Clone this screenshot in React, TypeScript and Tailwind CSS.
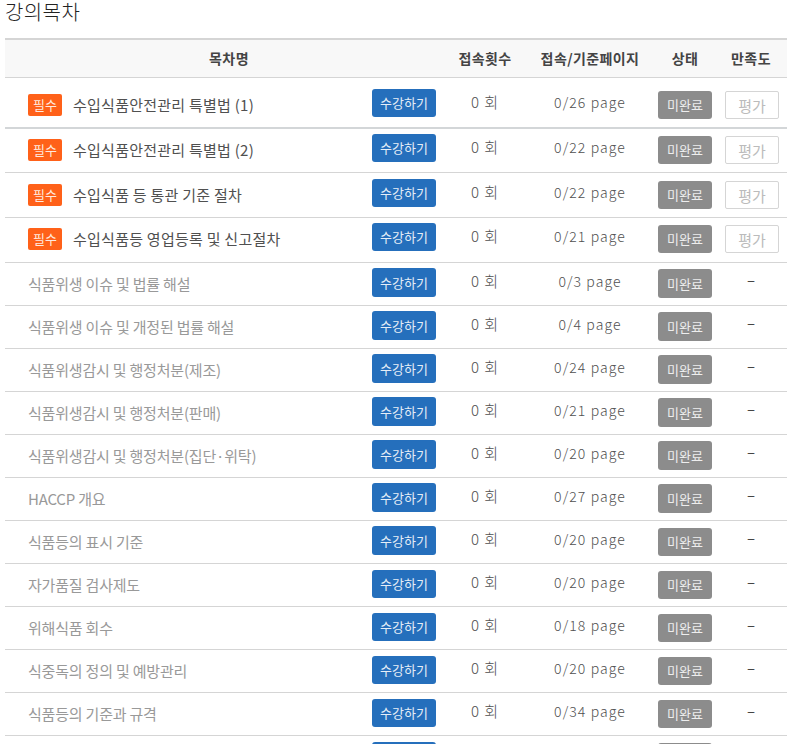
const kr = { fontFamily: '"Noto Sans CJK KR", "Noto Sans", sans-serif' };

type Row = {
  title: string;
  pages: string;
  required?: boolean;
  rowClass: string;
  btnClass: string;
  statusClass: string;
  textClass: string;
  titleClass?: string;
};

const lineB = 'border-b border-[#d5d5d5]';
const top = { rowClass: `h-[43px] pt-[5px] ${lineB}`, btnClass: 'h-[29px]', statusClass: 'mt-[1px] h-[29px]', textClass: 'leading-[26px]', titleClass: 'pt-[5px]' };
const mid = { rowClass: `h-[43px] pt-[5px] ${lineB}`, btnClass: 'h-[29px]', statusClass: 'mt-[2px] h-[28px]', textClass: 'leading-[26px]', titleClass: 'pt-[5px]' };
const low = { rowClass: `h-[43px] pt-[6px] ${lineB}`, btnClass: 'h-[28px]', statusClass: 'mt-[1px] h-[28px]', textClass: 'leading-[24px]', titleClass: 'pt-[4px]' };
const req = { btnClass: 'h-[28px]', statusClass: 'mt-[2px] h-[28px]', textClass: 'leading-[26px]' };

const rows: Row[] = [
  { title: '수입식품안전관리 특별법 (1)', pages: '0/26 page', required: true, rowClass: 'h-[51px] pt-[11px] border-b-2 border-[#d3d6d8]', ...req },
  { title: '수입식품안전관리 특별법 (2)', pages: '0/22 page', required: true, rowClass: `h-[44px] pt-[5px] ${lineB}`, ...req },
  { title: '수입식품 등 통관 기준 절차', pages: '0/22 page', required: true, rowClass: `h-[45px] pt-[6px] ${lineB}`, ...req },
  { title: '수입식품등 영업등록 및 신고절차', pages: '0/21 page', required: true, rowClass: `h-[45px] pt-[5px] ${lineB}`, ...req },
  { title: '식품위생 이슈 및 법률 해설', pages: '0/3 page', ...top },
  { title: '식품위생 이슈 및 개정된 법률 해설', pages: '0/4 page', ...top },
  { title: '식품위생감시 및 행정처분(제조)', pages: '0/24 page', ...top },
  { title: '식품위생감시 및 행정처분(판매)', pages: '0/21 page', ...top },
  { title: '식품위생감시 및 행정처분(집단·위탁)', pages: '0/20 page', ...top },
  { title: 'HACCP 개요', pages: '0/27 page', ...top },
  { title: '식품등의 표시 기준', pages: '0/20 page', ...mid },
  { title: '자가품질 검사제도', pages: '0/20 page', ...low },
  { title: '위해식품 회수', pages: '0/18 page', ...low },
  { title: '식중독의 정의 및 예방관리', pages: '0/20 page', ...low },
  { title: '식품등의 기준과 규격', pages: '0/34 page', ...low },
  { title: '', pages: '', ...low },
];

const cols = 'grid grid-cols-[440px_80px_130px_60px_72px]';

function CourseRow({ row }: { row: Row }) {
  return (
    <div className={`${cols} items-start ${row.rowClass}`}>
      <div className="flex items-start justify-between pr-[9px]">
        {row.required ? (
          <div className="flex items-center pl-[23px] pt-[5px]">
            <span className="flex h-[22px] w-[34px] items-center justify-center rounded-[2px] bg-[#ff6119] text-[13px] text-[#ffe9de]">
              필수
            </span>
            <span className="ml-[11px] text-[15px] leading-[22px] tracking-[0.25px] text-[#505050]">{row.title}</span>
          </div>
        ) : (
          <span className={`pl-[23px] text-[15px] leading-[22px] tracking-[-0.2px] text-[#999] ${row.titleClass}`}>{row.title}</span>
        )}
        <button className={`flex w-[64px] items-center justify-center rounded-[3px] bg-[#256fbc] text-[13px] text-[#e6eef7] ${row.btnClass}`}>
          {row.pages ? '수강하기' : ''}
        </button>
      </div>
      {row.pages ? (
        <>
          <div className={`text-center text-[15px] font-light tracking-[1px] text-[#505050] ${row.textClass}`}>0 회</div>
          <div className={`text-center text-[14px] font-light tracking-[1.1px] text-[#505050] ${row.textClass}`}>{row.pages}</div>
          <div className="flex justify-center">
            <span className={`flex w-[54px] items-center justify-center rounded-[3px] bg-[#8c8c8c] text-[13px] text-[#eee] ${row.statusClass}`}>
              미완료
            </span>
          </div>
          <div className="flex justify-center">
            {row.required ? (
              <span className="mt-[2px] ml-[2px] flex h-[28px] w-[54px] items-center justify-center rounded-[2px] border border-[#d5d5d5] bg-white pt-[2px] text-[15px] text-[#bbb]">
                평가
              </span>
            ) : (
              <span className="text-[15px] leading-[24px] text-[#444]">–</span>
            )}
          </div>
        </>
      ) : (
        <>
          <div />
          <div />
          <div className="flex justify-center">
            <span className={`w-[54px] rounded-[3px] bg-[#8c8c8c] ${row.statusClass}`} />
          </div>
          <div />
        </>
      )}
    </div>
  );
}

export default function App() {
  return (
    <div className="h-[744px] overflow-hidden bg-white px-[5px]" style={kr}>
      <h2 className="h-[38px] text-[20px] leading-[24px] font-light tracking-[0.4px] text-[#222]">강의목차</h2>
      <div className="w-[782px]">
        <div className={`${cols} h-[40px] items-center border-t-2 border-b border-t-[#d5d5d5] border-b-[#d5d5d5] bg-[#f8f8f8] text-center text-[14px] font-bold tracking-[0.4px] text-[#444]`}>
          <div className="pl-2">목차명</div>
          <div>접속횟수</div>
          <div>접속/기준페이지</div>
          <div>상태</div>
          <div>만족도</div>
        </div>
        {rows.map((row, i) => (
          <CourseRow key={i} row={row} />
        ))}
      </div>
    </div>
  );
}
